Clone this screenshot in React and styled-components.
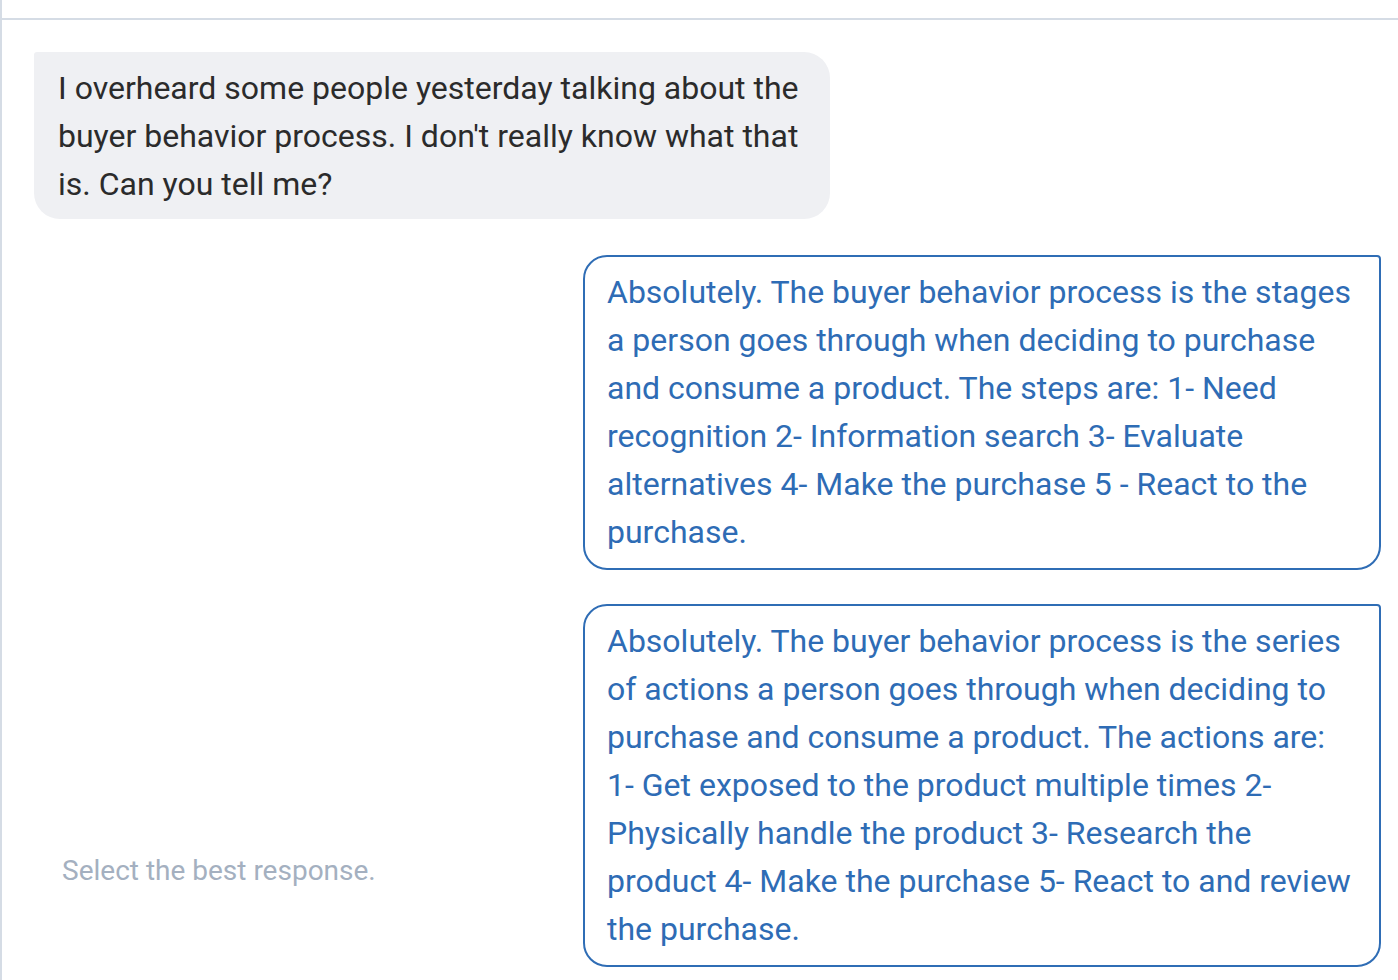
import React from "react";
import styled, { createGlobalStyle } from "styled-components";

const Global = createGlobalStyle`
  html, body { margin: 0; padding: 0; background: #ffffff; }
  body { font-family: Roboto, "Liberation Sans", Arial, sans-serif; }
  * { box-sizing: border-box; }
`;

const Page = styled.div`
  width: 1398px;
  height: 980px;
  overflow: hidden;
  padding-top: 18px;
  border-left: 2px solid #d5dce5;
  background: #ffffff;
`;

const Thread = styled.div`
  border-top: 2px solid #d5dce5;
  padding: 32px 17px 0 32px;
  display: flex;
  flex-direction: column;
`;

const UserBubble = styled.div`
  width: 796px;
  background: #eff0f3;
  color: #2b2b2b;
  font-size: 32px;
  line-height: 48px;
  padding: 12px 24px 11px 24px;
  border-radius: 3px 26px 26px 26px;
`;

const ChoiceArea = styled.div`
  display: flex;
  justify-content: space-between;
  margin-top: 36px;
`;

const Hint = styled.div`
  align-self: flex-end;
  color: #a4b0c0;
  font-size: 28px;
  line-height: 48px;
  padding: 0 0 72px 28px;
`;

const Options = styled.div`
  display: flex;
  flex-direction: column;
  gap: 34px;
  width: 798px;
`;

const Option = styled.div`
  border: 2px solid #2f6db5;
  border-radius: 24px 4px 24px 24px;
  color: #2e6cb5;
  font-size: 32px;
  line-height: 48px;
  padding: 11px 24px 12px 22px;
  background: #ffffff;
  cursor: pointer;
`;

export default function App() {
  return (
    <>
      <Global />
      <Page>
        <Thread>
          <UserBubble>
            I overheard some people yesterday talking about the buyer behavior process. I don't really know what that is. Can you tell me?
          </UserBubble>
          <ChoiceArea>
            <Hint>Select the best response.</Hint>
            <Options>
              <Option>
                Absolutely. The buyer behavior process is the stages a person goes through when deciding to purchase and consume a product. The steps are: 1- Need recognition 2- Information search 3- Evaluate alternatives 4- Make the purchase 5 - React to the purchase.
              </Option>
              <Option>
                Absolutely. The buyer behavior process is the series of actions a person goes through when deciding to purchase and consume a product. The actions are: 1- Get exposed to the product multiple times 2- Physically handle the product 3- Research the product 4- Make the purchase 5- React to and review the purchase.
              </Option>
            </Options>
          </ChoiceArea>
        </Thread>
      </Page>
    </>
  );
}
